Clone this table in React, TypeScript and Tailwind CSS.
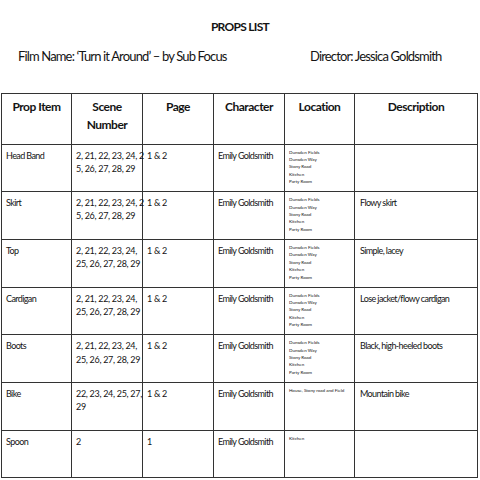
const locs = ["Dunsden Fields", "Dunsden Way", "Stony Road", "Kitchen", "Party Room"];

type Row = {
    item: string;
    scenes: string[];
    page: string;
    location: string[];
    description: string;
};

const rows: Row[] = [
    { item: "Head Band", scenes: ["2, 21, 22, 23, 24, 2", "5, 26, 27, 28, 29"], page: "1 & 2", location: locs, description: "" },
    { item: "Skirt", scenes: ["2, 21, 22, 23, 24, 2", "5, 26, 27, 28, 29"], page: "1 & 2", location: locs, description: "Flowy skirt" },
    { item: "Top", scenes: ["2, 21, 22, 23, 24,", "25, 26, 27, 28, 29"], page: "1 & 2", location: locs, description: "Simple, lacey" },
    { item: "Cardigan", scenes: ["2, 21, 22, 23, 24,", "25, 26, 27, 28, 29"], page: "1 & 2", location: locs, description: "Lose jacket/flowy cardigan" },
    { item: "Boots", scenes: ["2, 21, 22, 23, 24,", "25, 26, 27, 28, 29"], page: "1 & 2", location: locs, description: "Black, high-heeled boots" },
    { item: "Bike", scenes: ["22, 23, 24, 25, 27,", "29"], page: "1 & 2", location: ["House, Stony road and Field"], description: "Mountain bike" },
    { item: "Spoon", scenes: ["2"], page: "1", location: ["Kitchen"], description: "" },
];

const headers = ["Prop Item", "Scene Number", "Page", "Character", "Location", "Description"];

const cell = "border-[1.5px] border-[#333] align-top pl-[4px] pt-[4px]";

export default function App() {
    return (
        <div className="w-[480px] h-[480px] overflow-hidden bg-white text-[#141414] font-['Lato',sans-serif]">
            <div className="pt-[19px] text-center font-bold text-[12px] leading-[16px] tracking-[-0.7px]">
                PROPS LIST
            </div>
            <div className="flex mt-[12px] pl-[18px] text-[13px] leading-[18px] tracking-[-0.85px]">
                <div className="w-[292px]">Film Name: ‘Turn it Around’ – by Sub Focus</div>
                <div>Director: Jessica Goldsmith</div>
            </div>
            <table className="table-fixed border-collapse mt-[27.5px] ml-[1px] w-[476px]">
                <colgroup>
                    <col className="w-[70px]" />
                    <col className="w-[71px]" />
                    <col className="w-[71px]" />
                    <col className="w-[71px]" />
                    <col className="w-[70px]" />
                    <col className="w-[123px]" />
                </colgroup>
                <thead>
                    <tr className="h-[51px]">
                        {headers.map(h => (
                            <th
                                key={h}
                                className="border-[1.5px] border-[#333] align-top pt-[4px] px-1 font-bold text-[12px] leading-[18px] tracking-[-0.5px]"
                            >
                                {h === "Scene Number" ? <>Scene<br />Number</> : h}
                            </th>
                        ))}
                    </tr>
                </thead>
                <tbody className="text-[9px] leading-[13.3px] tracking-[-0.6px]">
                    {rows.map(r => (
                        <tr key={r.item} className="h-[47.7px]">
                            <td className={cell}>{r.item}</td>
                            <td className={`${cell} whitespace-nowrap tracking-[-0.3px]`}>
                                {r.scenes.map((s, i) => <div key={i}>{s}</div>)}
                            </td>
                            <td className={`${cell} tracking-[-0.3px]`}>{r.page}</td>
                            <td className={cell}>Emily Goldsmith</td>
                            <td className={`${cell} text-[4.5px] leading-[7.4px] tracking-normal whitespace-nowrap`}>
                                {r.location.map((l, i) => <div key={i}>{l}</div>)}
                            </td>
                            <td className={`${cell} pl-[5px]`}>{r.description}</td>
                        </tr>
                    ))}
                </tbody>
            </table>
        </div>
    );
}
